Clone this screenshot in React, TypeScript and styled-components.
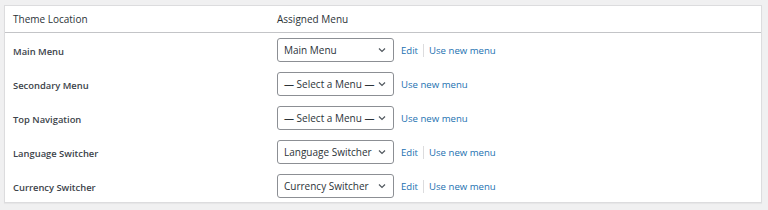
import React from 'react';
import styled, { createGlobalStyle } from 'styled-components';

const GlobalStyle = createGlobalStyle`
  html, body {
    margin: 0;
    padding: 0;
    background: #f0f0f1;
    font-family: "Open Sans", "Noto Sans", sans-serif;
  }
`;

const Page = styled.div`
  width: 768px;
  height: 210px;
  padding: 5px 6px 0 4px;
  box-sizing: border-box;
`;

const Table = styled.div`
  background: #fff;
  border: 1px solid #dcdcde;
  box-shadow: 0 1px 1px rgba(0, 0, 0, 0.04);
  display: grid;
  grid-template-columns: 263px 1fr;
  height: 198px;
  box-sizing: border-box;
`;

const HeadCell = styled.div<{ $first?: boolean }>`
  height: 26px;
  display: flex;
  align-items: center;
  padding-left: ${(p) => (p.$first ? '8px' : '9px')};
  border-bottom: 1px solid #c3c4c7;
  font-size: 10px;
  color: #2c3338;
`;

const LabelCell = styled.div`
  height: 34px;
  display: flex;
  align-items: center;
  padding-left: 8px;
  padding-top: 2px;
  box-sizing: border-box;
  font-size: 9.4px;
  font-weight: 600;
  color: #3c434a;
`;

const MenuCell = styled.div`
  height: 34px;
  display: flex;
  align-items: center;
  padding-left: 9px;
  gap: 7px;
`;

const SelectBox = styled.div`
  width: 117px;
  height: 24px;
  box-sizing: border-box;
  border: 1px solid #8c8f94;
  border-radius: 3px;
  display: flex;
  align-items: center;
  justify-content: space-between;
  padding: 0 6px 0 6px;
  font-size: 10px;
  color: #2c3338;
  white-space: nowrap;
`;

const Links = styled.div`
  display: flex;
  align-items: center;
  font-size: 9.6px;
  color: #2271b1;
`;

const Sep = styled.span`
  display: inline-block;
  width: 1px;
  height: 13px;
  background: #dcdcde;
  margin: 0 5px;
`;

const Chevron = () => (
  <svg width="10" height="10" viewBox="0 0 10 10">
    <path d="M2 3.5 L5 6.5 L8 3.5" fill="none" stroke="#50575e" strokeWidth="1.2" />
  </svg>
);

const rows = [
  { label: 'Main Menu', value: 'Main Menu', edit: true },
  { label: 'Secondary Menu', value: '— Select a Menu —', edit: false },
  { label: 'Top Navigation', value: '— Select a Menu —', edit: false },
  { label: 'Language Switcher', value: 'Language Switcher', edit: true },
  { label: 'Currency Switcher', value: 'Currency Switcher', edit: true },
];

export default function App() {
  return (
    <Page>
      <GlobalStyle />
      <Table>
        <HeadCell $first>Theme Location</HeadCell>
        <HeadCell>Assigned Menu</HeadCell>
        {rows.map((r) => (
          <React.Fragment key={r.label}>
            <LabelCell>{r.label}</LabelCell>
            <MenuCell>
              <SelectBox>
                <span>{r.value}</span>
                <Chevron />
              </SelectBox>
              <Links>
                {r.edit && (
                  <>
                    <span>Edit</span>
                    <Sep />
                  </>
                )}
                <span>Use new menu</span>
              </Links>
            </MenuCell>
          </React.Fragment>
        ))}
      </Table>
    </Page>
  );
}
